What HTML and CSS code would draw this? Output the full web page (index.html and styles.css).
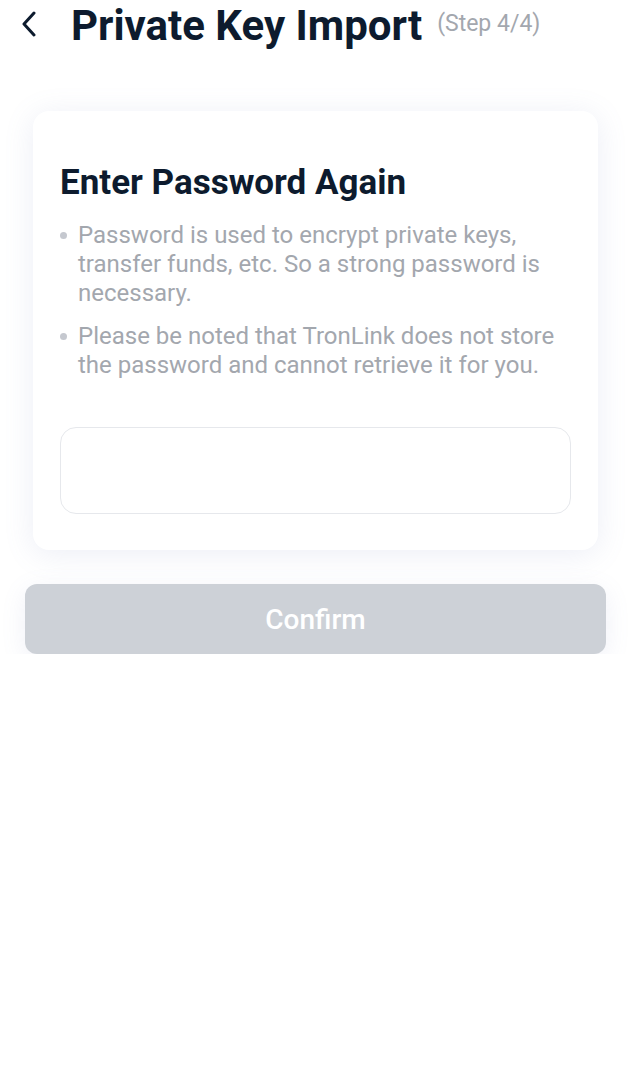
FILE: index.html
```html
<!DOCTYPE html>
<html lang="en">
<head>
<meta charset="utf-8">
<title>Private Key Import</title>
<link rel="stylesheet" href="styles.css">
</head>
<body>
<header class="topbar">
  <button class="back" aria-label="Back">
    <svg width="18" height="26" viewBox="0 0 18 26"><path d="M14 2 L4 13 L14 24" fill="none" stroke="#0d1b2e" stroke-width="3" stroke-linecap="round" stroke-linejoin="round"/></svg>
  </button>
  <h1 class="title">Private Key Import</h1>
  <span class="step">(Step 4/4)</span>
</header>
<main class="content">
  <section class="card">
    <h2 class="card-title">Enter Password Again</h2>
    <ul class="notes">
      <li>Password is used to encrypt private keys, transfer funds, etc. So a strong password is necessary.</li>
      <li>Please be noted that TronLink does not store the password and cannot retrieve it for you.</li>
    </ul>
    <input class="pwd" type="password" aria-label="Password">
  </section>
  <button class="confirm">Confirm</button>
</main>
</body>
</html>
```
FILE: styles.css
```css
* { box-sizing: border-box; }
html, body { margin: 0; padding: 0; background: #ffffff; }
body { font-family: Roboto, "Noto Sans", "Liberation Sans", sans-serif; width: 631px; }

.topbar {
  display: flex;
  align-items: center;
  height: 50px;
  padding: 0 0 0 20px;
}
.back {
  border: 0;
  background: none;
  padding: 0;
  width: 18px;
  height: 26px;
  margin-top: -2px;
  display: flex;
}
.title {
  margin: 0 0 0 33px;
  font-size: 42px;
  font-weight: 700;
  color: #0d1b2e;
  letter-spacing: 0;
}
.step {
  margin-left: 15px;
  font-size: 23px;
  color: #a3a7ae;
  margin-top: -4px;
}

.content {
  padding: 61px 25px 0;
  display: flex;
  flex-direction: column;
}
.card {
  margin: 0 8px;
  background: #fff;
  border-radius: 16px;
  box-shadow: 0 4px 30px rgba(120, 135, 190, 0.14);
  padding: 52px 27px 36px;
}
.card-title {
  margin: 0;
  font-size: 35px;
  line-height: 40px;
  font-weight: 700;
  color: #0d1b2e;
}
.notes {
  list-style: none;
  margin: 18px 0 0;
  padding: 0;
}
.notes li {
  position: relative;
  padding-left: 18px;
  font-size: 24px;
  line-height: 29px;
  color: #a3a7ae;
}
.notes li + li { margin-top: 14px; }
.notes li::before {
  content: "";
  position: absolute;
  left: 0;
  top: 11px;
  width: 7px;
  height: 7px;
  border-radius: 50%;
  background: #c5c8cf;
}
.pwd {
  display: block;
  width: 100%;
  height: 87px;
  margin-top: 47px;
  border: 1px solid #e6e8ec;
  border-radius: 16px;
  background: #fff;
  outline: none;
}
.confirm {
  margin-top: 34px;
  height: 70px;
  border: 0;
  border-radius: 12px;
  background: #cdd1d7;
  box-shadow: 0 6px 24px rgba(120, 135, 190, 0.12);
  color: #fff;
  font-family: Roboto, "Noto Sans", sans-serif;
  font-size: 28px;
  font-weight: 500;
}
```
